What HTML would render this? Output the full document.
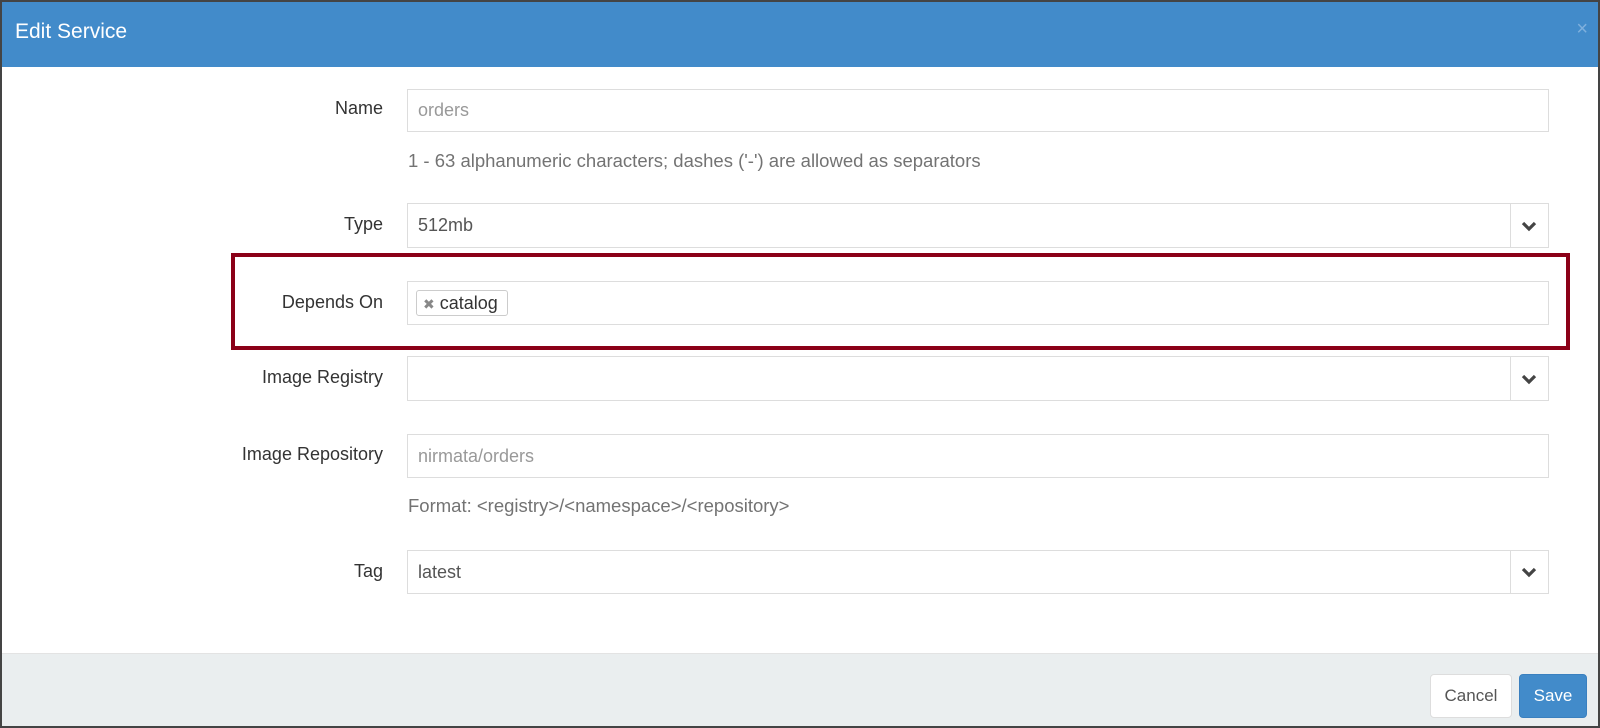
<!DOCTYPE html>
<html><head><style>
*{box-sizing:border-box;margin:0;padding:0}
body{width:1600px;height:728px;background:#fff;font-family:"Liberation Sans",Arial,sans-serif;position:relative;overflow:hidden}
.frame{position:absolute;left:0;top:0;width:1600px;height:728px;border:2px solid #444}
.hdr{position:absolute;left:2px;top:0;width:1596px;height:67px;background:#428bca}
.hdr h1{position:absolute;left:13px;top:20px;font-size:21px;font-weight:normal;color:#fff}
.hdr .x{position:absolute;right:10px;top:18px;color:#7fb0dd;font-size:20px}
.lbl{position:absolute;right:1217px;font-size:18px;color:#333;text-align:right}
.inp{position:absolute;left:407px;width:1142px;border:1px solid #ddd;background:#fff;font-size:18px;color:#555;padding-left:10px}
.ph{color:#999}
.sel:after{content:"";position:absolute;right:37px;top:0;bottom:0;border-left:1px solid #ddd}
.chev{position:absolute;right:10px;top:50%;margin-top:-7px}
.help{position:absolute;left:408px;font-size:18.5px;color:#737373}
.red{position:absolute;left:231px;top:253px;width:1339px;height:97px;border:4px solid #8b0018}
.tag{position:absolute;left:8px;top:8px;height:26px;width:92px;border:1px solid #ccc;border-radius:3px;padding:0 6px;font-size:18px;line-height:24px;color:#333;background:#fff;white-space:nowrap}
.ftr{position:absolute;left:2px;top:653px;width:1596px;height:73px;background:#eaeeef;border-top:1px solid #e3e3e3}
.btn{position:absolute;top:674px;height:44px;border-radius:4px;font-size:17px;line-height:42px;text-align:center}
</style></head><body>
<div class="hdr"><h1>Edit Service</h1><span class="x">×</span></div>

<div class="lbl" style="top:98px">Name</div>
<div class="inp" style="top:89px;height:43px;line-height:41px"><span class="ph">orders</span></div>
<div class="help" style="top:150px">1 - 63 alphanumeric characters; dashes ('-') are allowed as separators</div>

<div class="lbl" style="top:214px">Type</div>
<div class="inp sel" style="top:203px;height:45px;line-height:43px">512mb<svg class="chev" width="18" height="14" viewBox="0 0 18 14"><path d="M3 4l6 6 6-6" stroke="#444" stroke-width="3.2" fill="none"/></svg></div>

<div class="red"></div>
<div class="lbl" style="top:292px">Depends On</div>
<div class="inp" style="top:281px;height:44px"><div class="tag"><span style="color:#888;font-size:14px">✖</span> catalog</div></div>

<div class="lbl" style="top:367px">Image Registry</div>
<div class="inp sel" style="top:356px;height:45px"><svg class="chev" width="18" height="14" viewBox="0 0 18 14"><path d="M3 4l6 6 6-6" stroke="#444" stroke-width="3.2" fill="none"/></svg></div>

<div class="lbl" style="top:444px">Image Repository</div>
<div class="inp" style="top:434px;height:44px;line-height:42px"><span class="ph">nirmata/orders</span></div>
<div class="help" style="top:495px">Format: &lt;registry&gt;/&lt;namespace&gt;/&lt;repository&gt;</div>

<div class="lbl" style="top:561px">Tag</div>
<div class="inp sel" style="top:550px;height:44px;line-height:42px">latest<svg class="chev" width="18" height="14" viewBox="0 0 18 14"><path d="M3 4l6 6 6-6" stroke="#444" stroke-width="3.2" fill="none"/></svg></div>

<div class="ftr"></div>
<div class="btn" style="left:1430px;width:82px;background:#fff;border:1px solid #ddd;color:#555">Cancel</div>
<div class="btn" style="left:1519px;width:68px;background:#428bca;border:1px solid #3a80bf;color:#fff">Save</div>
<div class="frame"></div>
</body></html>
